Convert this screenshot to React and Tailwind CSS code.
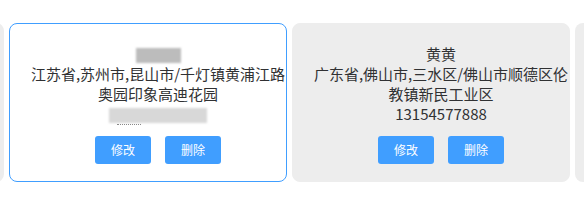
import React from 'react'

const addresses = [
  { id: 0, blank: true },
  {
    id: 1,
    name: '王先生',
    region: '江苏省,苏州市,昆山市/千灯镇黄浦江路奥园印象高迪花园',
    phone: '13800000000',
    hidden: true,
    active: true,
  },
  {
    id: 2,
    name: '黄黄',
    region: '广东省,佛山市,三水区/佛山市顺德区伦教镇新民工业区',
    phone: '13154577888',
  },
  { id: 3, blank: true },
]

function Blur({ w, color, dots }) {
  return (
    <span className="relative inline-block align-middle h-[15px]" style={{ width: w }}>
      <span className={`absolute inset-0 ${color} blur-[1px]`} />
      {dots && (
        <span className="absolute left-[8px] bottom-[-2px] w-[24px] h-[1px] border-b border-dotted border-[#888]" />
      )}
    </span>
  )
}

function AddressCard({ item }) {
  if (item.blank) {
    return <div className="shrink-0 w-[278px] h-[159px] rounded-lg bg-[#ededed]" />
  }
  return (
    <div
      className={`shrink-0 w-[278px] h-[159px] rounded-lg border pl-5 pt-5 ${
        item.active ? 'bg-white border-[#409eff]' : 'bg-[#ededed] border-[#ededed]'
      }`}
    >
      <div className="text-center text-[15px] leading-5 text-[#303133]">
        <div>{item.hidden ? <Blur w={45} color="bg-[#bcbcbc]" /> : item.name}</div>
        <div>{item.region}</div>
        <div>{item.hidden ? <Blur w={98} color="bg-[#d8d8d8]" dots /> : item.phone}</div>
      </div>
      <div className="mt-3 flex justify-center gap-[14px]">
        <button className="w-[56px] h-[28px] rounded-[3px] bg-[#409eff] text-white text-[12px]">修改</button>
        <button className="w-[56px] h-[28px] rounded-[3px] bg-[#409eff] text-white text-[12px]">删除</button>
      </div>
    </div>
  )
}

export default function App() {
  return (
    <div
      className="w-[584px] h-[218px] bg-white overflow-hidden"
      style={{ fontFamily: '"Microsoft YaHei", "Noto Sans CJK SC", sans-serif' }}
    >
      <div className="flex gap-[5px] pt-[23px] ml-[-274px]">
        {addresses.map((a) => (
          <AddressCard key={a.id} item={a} />
        ))}
      </div>
    </div>
  )
}
